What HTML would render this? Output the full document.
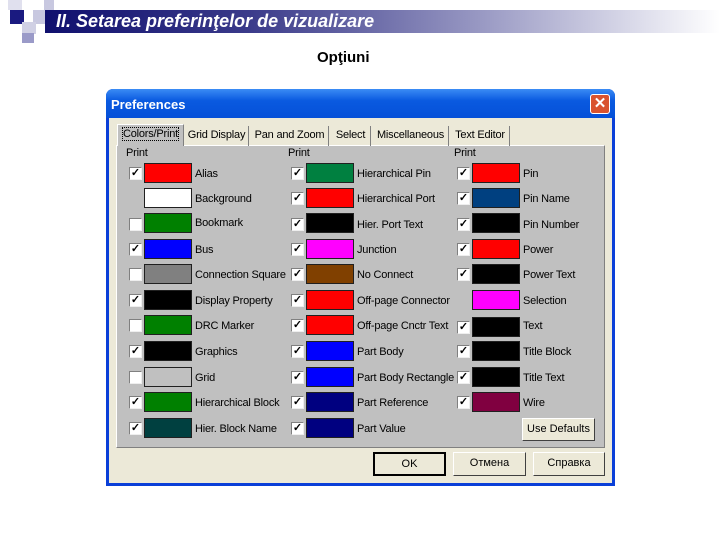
<!DOCTYPE html>
<html><head><meta charset="utf-8"><style>
*{margin:0;padding:0;box-sizing:border-box}
body{width:720px;height:540px;background:#fff;position:relative;overflow:hidden;font-family:"Liberation Sans",sans-serif}
.a{position:absolute}
.sq{position:absolute}
.ban{left:45px;top:10px;width:675px;height:23px;background:linear-gradient(90deg,#10106e 0%,#3a3a8a 30%,#9a9ac4 65%,#fff 100%)}
.ttl{left:56px;top:11px;color:#fff;font:italic bold 18px "Liberation Sans",sans-serif}
.win{left:106px;top:89px;width:509px;height:397px;background:#0a3fd8;border-radius:7px 7px 0 0}
.tb{left:106px;top:89px;width:509px;height:29px;background:linear-gradient(#3b8cf5,#0a5ae0 40%,#0550d8);border-radius:7px 7px 0 0}
.body{left:109px;top:118px;width:503px;height:365px;background:#ece9d8}
.panel{left:116px;top:145px;width:489px;height:303px;background:#c0c0c0;border:1px solid #fff;border-right-color:#808080;border-bottom-color:#808080}
.tab{position:absolute;top:126px;height:20px;font-size:11px;letter-spacing:-0.2px;color:#000;line-height:18px;text-align:center;border-right:1px solid #808080;white-space:nowrap}
.lab{position:absolute;font-size:11px;letter-spacing:-0.2px;color:#000;white-space:nowrap;margin-top:2px}
.cb{position:absolute;width:13px;height:13px;background:#fff;border:1px solid #808080;border-right-color:#eee;border-bottom-color:#eee;font-size:11px;line-height:10px;text-align:center;font-weight:bold}
.sw{position:absolute;width:48px;height:20px;border:1px solid #202020}
.btn{position:absolute;height:24px;background:#ece9d8;border:1px solid #fff;border-right-color:#404040;border-bottom-color:#404040;font-size:11px;text-align:center;line-height:21px}
</style></head><body>
<div class="sq" style="left:8px;top:0;width:14px;height:10px;background:#e0e0ee"></div>
<div class="sq" style="left:44px;top:0;width:10px;height:12px;background:#c8c8e0"></div>
<div class="sq" style="left:10px;top:10px;width:14px;height:14px;background:#1a1a80"></div>
<div class="sq" style="left:33px;top:10px;width:12px;height:14px;background:#c8c8e0"></div>
<div class="sq" style="left:22px;top:22px;width:14px;height:12px;background:#d0d0e4"></div>
<div class="sq" style="left:22px;top:33px;width:12px;height:10px;background:#9a9ac8"></div>
<div class="a ban"></div>
<div class="a ttl">II. Setarea preferinţelor de vizualizare</div>
<div class="a" style="left:317px;top:49px;font-weight:bold;font-size:15px">Opţiuni</div>

<div class="a win"></div>
<div class="a tb"></div>
<div class="a" style="left:111px;top:97px;color:#fff;font-weight:bold;font-size:13px">Preferences</div>
<div class="a" style="left:590px;top:94px;width:20px;height:20px;background:#d9532f;border:1px solid #fff;border-radius:3px;color:#fff;font-size:15px;text-align:center;line-height:17px;font-weight:bold">✕</div>
<div class="a body"></div>
<div class="a panel"></div>
<div class="tab" style="left:117px;width:67px;top:124px;height:22px;background:#c0c0c0;border:1px solid #fff;border-bottom:none;border-right-color:#808080"><span style="outline:1px dotted #000">Colors/Print</span></div>
<div class="tab" style="left:185px;width:64px">Grid Display</div>
<div class="tab" style="left:251px;width:78px">Pan and Zoom</div>
<div class="tab" style="left:331px;width:40px">Select</div>
<div class="tab" style="left:373px;width:76px">Miscellaneous</div>
<div class="tab" style="left:451px;width:59px">Text Editor</div>
<div class="lab" style="left:126px;top:145px">Print</div>
<div class="lab" style="left:288px;top:145px">Print</div>
<div class="lab" style="left:454px;top:145px">Print</div>

<!-- col1 -->
<div class="cb" style="left:129px;top:167px">✓</div><div class="sw" style="left:144px;top:163px;background:#f00"></div><div class="lab" style="left:195px;top:166px">Alias</div>
<div class="sw" style="left:144px;top:188px;background:#fff"></div><div class="lab" style="left:195px;top:191px">Background</div>
<div class="cb" style="left:129px;top:218px"></div><div class="sw" style="left:144px;top:213px;background:#008000"></div><div class="lab" style="left:195px;top:215px">Bookmark</div>
<div class="cb" style="left:129px;top:243px">✓</div><div class="sw" style="left:144px;top:239px;background:#00f"></div><div class="lab" style="left:195px;top:242px">Bus</div>
<div class="cb" style="left:129px;top:268px"></div><div class="sw" style="left:144px;top:264px;background:#808080"></div><div class="lab" style="left:195px;top:267px">Connection Square</div>
<div class="cb" style="left:129px;top:294px">✓</div><div class="sw" style="left:144px;top:290px;background:#000"></div><div class="lab" style="left:195px;top:293px">Display Property</div>
<div class="cb" style="left:129px;top:319px"></div><div class="sw" style="left:144px;top:315px;background:#008000"></div><div class="lab" style="left:195px;top:318px">DRC Marker</div>
<div class="cb" style="left:129px;top:345px">✓</div><div class="sw" style="left:144px;top:341px;background:#000"></div><div class="lab" style="left:195px;top:344px">Graphics</div>
<div class="cb" style="left:129px;top:371px"></div><div class="sw" style="left:144px;top:367px;background:#c0c0c0"></div><div class="lab" style="left:195px;top:370px">Grid</div>
<div class="cb" style="left:129px;top:396px">✓</div><div class="sw" style="left:144px;top:392px;background:#008000"></div><div class="lab" style="left:195px;top:395px">Hierarchical Block</div>
<div class="cb" style="left:129px;top:422px">✓</div><div class="sw" style="left:144px;top:418px;background:#004040"></div><div class="lab" style="left:195px;top:421px">Hier. Block Name</div>
<!-- col2 -->
<div class="cb" style="left:291px;top:167px">✓</div><div class="sw" style="left:306px;top:163px;background:#008040"></div><div class="lab" style="left:357px;top:166px">Hierarchical Pin</div>
<div class="cb" style="left:291px;top:192px">✓</div><div class="sw" style="left:306px;top:188px;background:#f00"></div><div class="lab" style="left:357px;top:191px">Hierarchical Port</div>
<div class="cb" style="left:291px;top:218px">✓</div><div class="sw" style="left:306px;top:213px;background:#000"></div><div class="lab" style="left:357px;top:217px">Hier. Port Text</div>
<div class="cb" style="left:291px;top:243px">✓</div><div class="sw" style="left:306px;top:239px;background:#f0f"></div><div class="lab" style="left:357px;top:242px">Junction</div>
<div class="cb" style="left:291px;top:268px">✓</div><div class="sw" style="left:306px;top:264px;background:#804000"></div><div class="lab" style="left:357px;top:267px">No Connect</div>
<div class="cb" style="left:291px;top:294px">✓</div><div class="sw" style="left:306px;top:290px;background:#f00"></div><div class="lab" style="left:357px;top:293px">Off-page Connector</div>
<div class="cb" style="left:291px;top:319px">✓</div><div class="sw" style="left:306px;top:315px;background:#f00"></div><div class="lab" style="left:357px;top:318px">Off-page Cnctr Text</div>
<div class="cb" style="left:291px;top:345px">✓</div><div class="sw" style="left:306px;top:341px;background:#00f"></div><div class="lab" style="left:357px;top:344px">Part Body</div>
<div class="cb" style="left:291px;top:371px">✓</div><div class="sw" style="left:306px;top:367px;background:#00f"></div><div class="lab" style="left:357px;top:370px">Part Body Rectangle</div>
<div class="cb" style="left:291px;top:396px">✓</div><div class="sw" style="left:306px;top:392px;background:#000080"></div><div class="lab" style="left:357px;top:395px">Part Reference</div>
<div class="cb" style="left:291px;top:422px">✓</div><div class="sw" style="left:306px;top:418px;background:#000080"></div><div class="lab" style="left:357px;top:421px">Part Value</div>
<!-- col3 -->
<div class="cb" style="left:457px;top:167px">✓</div><div class="sw" style="left:472px;top:163px;background:#f00"></div><div class="lab" style="left:523px;top:166px">Pin</div>
<div class="cb" style="left:457px;top:192px">✓</div><div class="sw" style="left:472px;top:188px;background:#004080"></div><div class="lab" style="left:523px;top:191px">Pin Name</div>
<div class="cb" style="left:457px;top:218px">✓</div><div class="sw" style="left:472px;top:213px;background:#000"></div><div class="lab" style="left:523px;top:217px">Pin Number</div>
<div class="cb" style="left:457px;top:243px">✓</div><div class="sw" style="left:472px;top:239px;background:#f00"></div><div class="lab" style="left:523px;top:242px">Power</div>
<div class="cb" style="left:457px;top:268px">✓</div><div class="sw" style="left:472px;top:264px;background:#000"></div><div class="lab" style="left:523px;top:267px">Power Text</div>
<div class="sw" style="left:472px;top:290px;background:#f0f"></div><div class="lab" style="left:523px;top:293px">Selection</div>
<div class="cb" style="left:457px;top:321px">✓</div><div class="sw" style="left:472px;top:317px;background:#000"></div><div class="lab" style="left:523px;top:318px">Text</div>
<div class="cb" style="left:457px;top:345px">✓</div><div class="sw" style="left:472px;top:341px;background:#000"></div><div class="lab" style="left:523px;top:344px">Title Block</div>
<div class="cb" style="left:457px;top:371px">✓</div><div class="sw" style="left:472px;top:367px;background:#000"></div><div class="lab" style="left:523px;top:370px">Title Text</div>
<div class="cb" style="left:457px;top:396px">✓</div><div class="sw" style="left:472px;top:392px;background:#800040"></div><div class="lab" style="left:523px;top:395px">Wire</div>
<div class="btn" style="left:522px;top:418px;width:73px;height:23px">Use Defaults</div>

<div class="btn" style="left:373px;top:452px;width:73px;border:2px solid #000">OK</div>
<div class="btn" style="left:453px;top:452px;width:73px">Отмена</div>
<div class="btn" style="left:533px;top:452px;width:72px">Справка</div>
</body></html>
